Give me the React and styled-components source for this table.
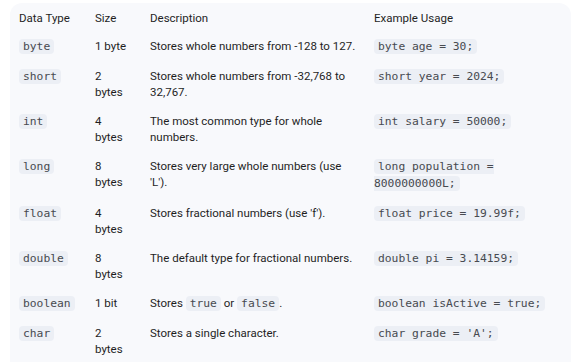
import React from 'react';
import styled, { createGlobalStyle } from 'styled-components';

const GlobalStyle = createGlobalStyle`
  body {
    margin: 0;
    background: #ffffff;
    font-family: Roboto, "Open Sans", sans-serif;
    color: #1f1f1f;
  }
`;

const Page = styled.div`
  padding: 3px 12px 0 10px;
`;

const Card = styled.div`
  background: #f8f9fc;
  border-radius: 12px 12px 0 0;
  padding: 0 9px;
`;

const Table = styled.table`
  width: 100%;
  border-collapse: collapse;
  table-layout: fixed;
  font-size: 11.5px;
  line-height: 16px;
`;

const Th = styled.th`
  text-align: left;
  font-weight: 400;
  padding: 7px ${(p) => p.$gap ?? 20}px 5px 0;
  vertical-align: top;
`;

const Td = styled.td`
  padding: 7px ${(p) => p.$gap ?? 20}px 6px 0;
  vertical-align: top;
`;

const Code = styled.code`
  font-family: "DejaVu Sans Mono", "Liberation Mono", monospace;
  font-size: 11.3px;
  color: #474a50;
  background: #eceff5;
  border-radius: 4px;
  padding: 1px 4px;
`;

const rows = [
  { type: 'byte', size: '1 byte', desc: 'Stores whole numbers from -128 to 127.', ex: 'byte age = 30;' },
  { type: 'short', size: '2 bytes', desc: 'Stores whole numbers from -32,768 to 32,767.', ex: 'short year = 2024;' },
  { type: 'int', size: '4 bytes', desc: 'The most common type for whole numbers.', ex: 'int salary = 50000;' },
  { type: 'long', size: '8 bytes', desc: "Stores very large whole numbers (use 'L').", ex: 'long population = 8000000000L;' },
  { type: 'float', size: '4 bytes', desc: "Stores fractional numbers (use 'f').", ex: 'float price = 19.99f;' },
  { type: 'double', size: '8 bytes', desc: 'The default type for fractional numbers.', ex: 'double pi = 3.14159;' },
  {
    type: 'boolean',
    size: '1 bit',
    desc: (
      <>
        Stores <Code>true</Code> or <Code>false</Code>.
      </>
    ),
    ex: 'boolean isActive = true;',
  },
  { type: 'char', size: '2 bytes', desc: 'Stores a single character.', ex: "char grade = 'A';" },
];

export default function App() {
  return (
    <Page>
      <GlobalStyle />
      <Card>
        <Table>
          <colgroup>
            <col style={{ width: 76 }} />
            <col style={{ width: 55 }} />
            <col style={{ width: 224 }} />
            <col />
          </colgroup>
          <thead>
            <tr>
              <Th>Data Type</Th>
              <Th>Size</Th>
              <Th $gap={16}>Description</Th>
              <Th $gap={0}>Example Usage</Th>
            </tr>
          </thead>
          <tbody>
            {rows.map((r) => (
              <tr key={r.type}>
                <Td><Code>{r.type}</Code></Td>
                <Td>{r.size}</Td>
                <Td $gap={16}>{r.desc}</Td>
                <Td $gap={0}><Code>{r.ex}</Code></Td>
              </tr>
            ))}
          </tbody>
        </Table>
      </Card>
    </Page>
  );
}
